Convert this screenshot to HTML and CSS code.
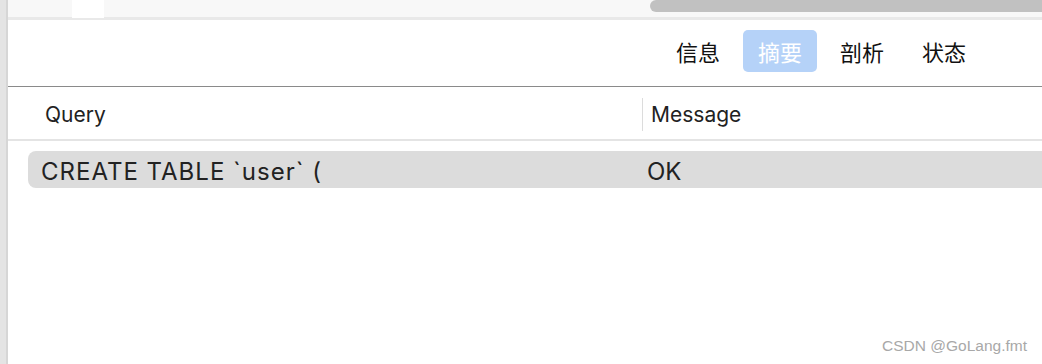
FILE: index.html
```html
<!DOCTYPE html>
<html lang="zh-CN">
<head>
<meta charset="utf-8">
<link rel="stylesheet" href="styles.css">
</head>
<body>
<div class="app">
  <div class="side"></div>
  <div class="main">
    <div class="topbar">
      <div class="toptab"></div>
      <div class="scrollthumb"></div>
    </div>
    <div class="tabs">
      <div class="tab">信息</div>
      <div class="tab active">摘要</div>
      <div class="tab">剖析</div>
      <div class="tab">状态</div>
    </div>
    <div class="thead">
      <div class="col col-query">Query</div>
      <div class="col col-msg">Message</div>
    </div>
    <div class="row">
      <div class="cell cell-query">CREATE TABLE `user` (</div>
      <div class="cell cell-msg">OK</div>
    </div>
  </div>
</div>
<div class="watermark">CSDN @GoLang.fmt</div>
</body>
</html>
```
FILE: styles.css
```css
html, body {
  margin: 0;
  padding: 0;
  background: #ffffff;
}
body {
  width: 1042px;
  height: 364px;
  overflow: hidden;
  position: relative;
  font-family: "Inter", "Liberation Sans", "Noto Sans CJK SC", sans-serif;
  color: #222222;
}
.app {
  display: flex;
  height: 364px;
}
.side {
  width: 6px;
  flex: none;
  background: #e4e4e4;
  border-right: 2px solid #d6d6d6;
}
.main {
  flex: 1;
  display: flex;
  flex-direction: column;
  min-width: 0;
}
.topbar {
  position: relative;
  height: 17px;
  background: #f8f8f8;
  border-bottom: 3px solid #e9e9e9;
}
.toptab {
  margin-left: 64px;
  width: 32px;
  height: 18px;
  background: #ffffff;
}
.scrollthumb {
  position: absolute;
  left: 642px;
  top: 0;
  right: -10px;
  height: 12px;
  border-radius: 6px;
  background: #c1c1c1;
}
.tabs {
  height: 67px;
  box-sizing: border-box;
  padding: 10px 61px 0 0;
  display: flex;
  justify-content: flex-end;
  gap: 8px;
  border-bottom: 1px solid #8a8a8a;
}
.tab {
  width: 74px;
  height: 42px;
  border-radius: 5px;
  display: flex;
  align-items: center;
  justify-content: center;
  font-family: "Noto Sans CJK SC", sans-serif;
  font-size: 22px;
  color: #111111;
}
.tab.active {
  background: #b5d2f8;
  color: #ffffff;
}
.thead {
  height: 54px;
  box-sizing: border-box;
  padding-top: 2px;
  display: flex;
  align-items: center;
  border-bottom: 2px solid #e4e4e4;
  font-size: 21px;
}
.col-query {
  width: 597px;
  padding-left: 37px;
  flex: none;
}
.col-msg {
  border-left: 1px solid #dcdcdc;
  padding-left: 8px;
  height: 33px;
  line-height: 33px;
}
.row {
  margin: 10px 0 0 20px;
  height: 37px;
  box-sizing: border-box;
  padding-top: 3px;
  display: flex;
  align-items: center;
  background: #dcdcdc;
  border-radius: 8px 0 0 8px;
  font-size: 24px;
}
.cell-query {
  width: 606px;
  padding-left: 13px;
  flex: none;
  letter-spacing: 1px;
}
.watermark {
  position: absolute;
  right: 15px;
  bottom: 9px;
  font-family: "Liberation Sans", sans-serif;
  font-size: 15.5px;
  color: #a8a8a8;
}
```
